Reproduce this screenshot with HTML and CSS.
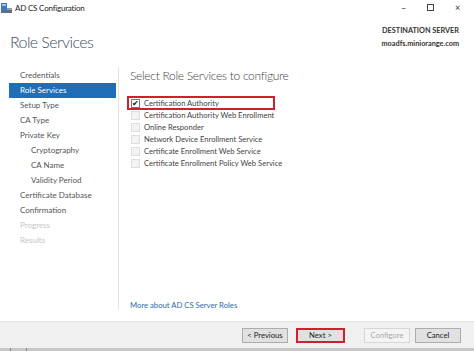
FILE: index.html
```html
<!DOCTYPE html>
<html lang="en">
<head>
    <meta charset="UTF-8">
    <title>AD CS Configuration</title>
    <link rel="stylesheet" href="styles.css">
</head>
<body>
    <div class="window">
        <div class="titlebar">
            <svg class="app-icon" width="11" height="10" viewBox="0 0 11 10">
                <rect x="0" y="0" width="6" height="7" fill="#3a78c0"/>
                <rect x="1" y="1" width="4" height="2" fill="#9cc4ec"/>
                <rect x="0" y="7" width="11" height="3" fill="#5c6f86"/>
                <rect x="6" y="5" width="5" height="2" fill="#8aa0b8"/>
            </svg>
            <span class="title-text">AD CS Configuration</span>
            <div class="controls">
                <span class="ctl">&#8211;</span>
                <span class="ctl"><span class="max-box"></span></span>
                <span class="ctl close">&#215;</span>
            </div>
        </div>

        <div class="header">
            <h1>Role Services</h1>
            <div class="dest">
                <div class="dest-label">DESTINATION SERVER</div>
                <div class="dest-name">moadfs.miniorange.com</div>
            </div>
        </div>

        <div class="main">
            <ul class="nav">
                <li>Credentials</li>
                <li class="active">Role Services</li>
                <li>Setup Type</li>
                <li>CA Type</li>
                <li>Private Key</li>
                <li class="sub">Cryptography</li>
                <li class="sub">CA Name</li>
                <li class="sub">Validity Period</li>
                <li>Certificate Database</li>
                <li>Confirmation</li>
                <li class="off">Progress</li>
                <li class="off">Results</li>
            </ul>

            <div class="content">
                <h2>Select Role Services to configure</h2>
                <div class="roles">
                    <label class="role marked"><span class="box checked">&#10004;</span>Certification Authority</label>
                    <label class="role"><span class="box"></span>Certification Authority Web Enrollment</label>
                    <label class="role"><span class="box"></span>Online Responder</label>
                    <label class="role"><span class="box"></span>Network Device Enrollment Service</label>
                    <label class="role"><span class="box"></span>Certificate Enrollment Web Service</label>
                    <label class="role"><span class="box"></span>Certificate Enrollment Policy Web Service</label>
                </div>
                <a class="more" href="#">More about AD CS Server Roles</a>
            </div>
        </div>

        <div class="footer">
            <button class="btn">&lt; Previous</button>
            <button class="btn marked-btn">Next &gt;</button>
            <button class="btn disabled">Configure</button>
            <button class="btn">Cancel</button>
        </div>
        <div class="strip">
            <span class="tick"></span>
            <span class="tick"></span>
        </div>
    </div>
</body>
</html>
```

FILE: styles.css
```css
* {
    margin: 0;
    padding: 0;
    box-sizing: border-box;
}

body {
    font-family: Lato, "Open Sans", sans-serif;
    background: #fff;
    color: #444;
    width: 474px;
    height: 351px;
    overflow: hidden;
}

.window {
    display: flex;
    flex-direction: column;
    height: 351px;
}

/* Title bar */
.titlebar {
    display: flex;
    align-items: center;
    height: 15px;
    padding-left: 1px;
    font-size: 8px;
    letter-spacing: -0.2px;
    color: #222;
}

.app-icon {
    margin-right: 3px;
}

.controls {
    margin-left: auto;
    display: flex;
}

.ctl {
    width: 27px;
    text-align: center;
    font-size: 9px;
    color: #333;
    display: flex;
    justify-content: center;
    align-items: center;
}

.ctl.close {
    margin-right: 3px;
}

.max-box {
    width: 7px;
    height: 7px;
    border: 1px solid #444;
}

/* Header */
.header {
    display: flex;
    justify-content: space-between;
    padding: 9px 15px 0 10px;
    height: 52px;
}

.header h1 {
    font-weight: 300;
    font-size: 16px;
    letter-spacing: -0.6px;
    color: #3c5068;
    margin-top: 8px;
}

.dest {
    text-align: right;
    font-size: 7.3px;
    color: #333;
    line-height: 13px;
}

.dest-label,
.dest-name {
    font-weight: 700;
}

/* Main area */
.main {
    display: flex;
    flex: 1;
}

.nav {
    list-style: none;
    width: 119px;
    padding: 1px 2px 0 9px;
    border-right: 1px solid #e3e3e3;
    margin-bottom: 11px;
    font-size: 8px;
}

.nav li {
    height: 15px;
    line-height: 15px;
    padding-left: 11px;
    color: #555;
}

.nav li.active {
    background: #1e6fb8;
    color: #fff;
}

.nav li.sub {
    padding-left: 22px;
}

.nav li.off {
    color: #c6c6c6;
}

.content {
    flex: 1;
    padding: 1px 0 0 11px;
    display: flex;
    flex-direction: column;
}

.content h2 {
    font-weight: 300;
    font-size: 12px;
    letter-spacing: -0.3px;
    color: #444;
    height: 15px;
    line-height: 15px;
}

.roles {
    margin-top: 13px;
    display: flex;
    flex-direction: column;
}

.role {
    display: flex;
    align-items: center;
    height: 12px;
    font-size: 7.6px;
    color: #444;
    margin-left: 1px;
}

.role.marked {
    margin-left: -3px;
    width: 148px;
    height: 14px;
    margin-bottom: -1px;
    border: 2px solid #d0202e;
    padding-left: 2px;
}

.box {
    width: 9px;
    height: 9px;
    border: 1px solid #dedede;
    background: #f3f3f3;
    margin-right: 4px;
    font-size: 8px;
    line-height: 7px;
    text-align: center;
    color: #111;
}

.box.checked {
    background: #fff;
    border-color: #777;
}

.more {
    margin-top: auto;
    margin-bottom: 11px;
    font-size: 7.7px;
    color: #2a6cb0;
    text-decoration: none;
}

/* Footer */
.footer {
    height: 27px;
    background: #f0f0f0;
    border-top: 1px solid #e2e2e2;
    display: flex;
    justify-content: flex-end;
    align-items: center;
    padding-right: 13px;
    gap: 5px;
}

.btn {
    font-family: inherit;
    font-size: 7.7px;
    height: 15px;
    width: 46px;
    background: #e1e1e1;
    border: 1px solid #adadad;
    color: #222;
}

.btn.marked-btn {
    width: 49px;
    border: 2px solid #d0202e;
    margin-right: 14px;
    margin-left: 3px;
}

.btn.disabled {
    color: #aaa;
    background: #f4f4f4;
    border-color: #d6d6d6;
}

.strip {
    height: 3px;
    background: #c8c8c8;
    display: flex;
    gap: 15px;
    padding-left: 10px;
}

.tick {
    width: 1px;
    background: #888;
}
```
